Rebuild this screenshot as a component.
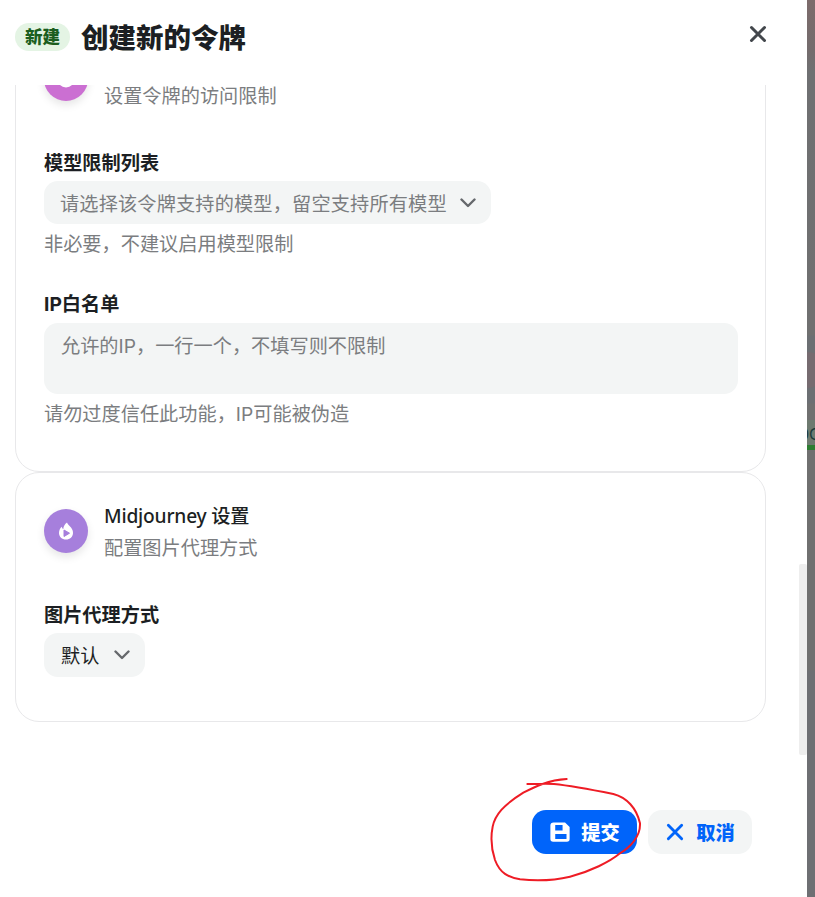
<div class="page">
  <aside class="drawer">
    <header class="head">
      <span class="tag">新建</span>
      <h1>创建新的令牌</h1>
      <button class="close" aria-label="关闭">
        <svg viewBox="0 0 24 24" width="24" height="24"><path d="M5.500 5.500l13 13M18.500 5.500l-13 13" /></svg>
      </button>
    </header>

    <div class="scroll">
      <div class="thumb"></div>
      <section class="card first">
        <div class="card-head">
          <span class="avatar pink">
            <svg viewBox="0 0 16 16" width="20" height="20">
              <circle cx="8" cy="8" r="5.500" fill="none" stroke="#fff" stroke-width="2.600" />
            </svg>
          </span>
          <div class="titles">
            <div class="title-space"></div>
            <div class="sub">设置令牌的访问限制</div>
          </div>
        </div>

        <div class="field model">
          <div class="label">模型限制列表</div>
          <div class="select wide">
            <span class="placeholder">请选择该令牌支持的模型，留空支持所有模型</span>
            <svg class="chev" viewBox="0 0 16 16" width="16" height="16"><path d="M1.500 4.500L8 11l6.500-6.500" /></svg>
          </div>
          <div class="help">非必要，不建议启用模型限制</div>
        </div>

        <div class="field ip">
          <div class="label">IP白名单</div>
          <div class="textarea"><span class="placeholder">允许的IP，一行一个，不填写则不限制</span></div>
          <div class="help">请勿过度信任此功能，IP可能被伪造</div>
        </div>
      </section>

      <section class="card second">
        <div class="card-head">
          <span class="avatar purple">
            <svg viewBox="0 0 16 18" width="16" height="18">
              <path d="M9 .5C9.500 2.500 11.500 3.500 13 5.500C14.500 7.500 15 9 15 11C15 14.800 12 17.500 8 17.500C4 17.500 1 14.800 1 11C1 8.500 2 6.500 3.700 4.800C4 6 4.500 6.800 5.300 7.200C5.300 4.500 6.800 2 9 .5Z" fill="#fff" />
              <path d="M6 8L11.500 11.200L6 14.500Z" fill="#a67fdc" stroke="#a67fdc" stroke-width="1" stroke-linejoin="round" />
            </svg>
          </span>
          <div class="titles">
            <div class="title">Midjourney 设置</div>
            <div class="sub">配置图片代理方式</div>
          </div>
        </div>

        <div class="field proxy">
          <div class="label">图片代理方式</div>
          <div class="select short">
            <span class="value">默认</span>
            <svg class="chev" viewBox="0 0 16 16" width="16" height="16"><path d="M1.500 4.500L8 11l6.500-6.500" /></svg>
          </div>
        </div>
      </section>
    </div>

    <footer class="foot">
      <button class="btn primary">
        <svg viewBox="0 0 24 24" width="22" height="22">
          <path fill-rule="evenodd" d="M5 1.500h12.500L22.500 6.500V19.500a3 3 0 0 1-3 3H4.500a3 3 0 0 1-3-3V5a3.500 3.500 0 0 1 3.500-3.500zM6.800 4.300v6h8v-6zM6.800 14.300v5.200h12.300v-5.200z" fill="#fff" />
        </svg>
        提交
      </button>
      <button class="btn ghost">
        <svg class="x" viewBox="0 0 24 24" width="20" height="20"><path d="M4 4l16 16M20 4L4 20" /></svg>
        取消
      </button>
    </footer>
  </aside>

  <div class="mask">
    <span class="blob"></span>
    <span class="green">0C</span>
  </div>

  <svg class="scribble" viewBox="0 0 1005 411" width="335" height="137" aria-hidden="true">
    <path d="M142 72C170 72 200 71 222 72C280 78 340 90 400 102C440 112 470 145 480 190C482 230 450 262 420 280C390 305 330 335 270 350C220 362 160 362 120 358C85 352 60 340 45 300C35 270 32 230 38 200C45 165 70 135 130 98C165 80 205 60 260 57" />
  </svg>
</div>

<style>
  :global(body) {
    margin: 0;
    background: #fff;
    font-family: Inter, "Noto Sans CJK SC", sans-serif;
  }
  .page {
    position: relative;
    display: flex;
    width: 815px;
    height: 897px;
    overflow: hidden;
  }
  .drawer {
    width: 807px;
    height: 897px;
    display: flex;
    flex-direction: column;
    background: #fff;
    flex: none;
  }
  .head {
    height: 85px;
    flex: none;
    display: flex;
    align-items: flex-start;
    padding: 23px 37px 0 15px;
    box-sizing: border-box;
  }
  .tag {
    width: 55px;
    height: 28px;
    border-radius: 14px;
    background: #e4f4e4;
    color: #1b5e20;
    font-size: 17.600px;
    font-weight: 900;
    line-height: 28px;
    text-align: center;
    margin-right: 11px;
  }
  h1 {
    margin: 0;
    font-size: 27.500px;
    line-height: 30px;
    font-weight: 900;
    color: #1c1f23;
    flex: 1;
  }
  .close {
    border: 0;
    background: none;
    padding: 0;
    width: 24px;
    height: 24px;
    margin-top: -1px;
  }
  .close path {
    fill: none;
    stroke: #43474c;
    stroke-width: 3;
    stroke-linecap: round;
  }
  .scroll {
    position: relative;
    flex: 1;
    overflow: hidden;
    padding: 0 41px 0 15px;
  }
  .thumb {
    position: absolute;
    right: 0;
    top: 479px;
    width: 8px;
    height: 191px;
    border-radius: 2px;
    background: #eeeeee;
  }
  .card {
    box-sizing: border-box;
    width: 751px;
    border: 1px solid #e8e8ea;
    border-radius: 24px;
    padding: 36px 27px 0 28px;
    background: #fff;
  }
  .first {
    margin-top: -65px;
    height: 452px;
  }
  .second {
    height: 250px;
  }
  .card-head {
    display: flex;
    align-items: center;
    gap: 16px;
    height: 44px;
  }
  .avatar {
    width: 44px;
    height: 44px;
    border-radius: 50%;
    display: flex;
    align-items: center;
    justify-content: center;
    box-shadow: 0 4px 8px rgba(0, 0, 0, 0.1);
    flex: none;
  }
  .pink { background: #cb6fd2; }
  .purple { background: #a67fdc; }
  .titles {
    display: flex;
    flex-direction: column;
    gap: 8px;
    margin-top: 2px;
  }
  .title-space { height: 24px; }
  .title {
    font-family: "Noto Sans", "Noto Sans CJK SC", sans-serif;
    font-size: 19.200px;
    line-height: 24px;
    font-weight: 500;
    letter-spacing: -0.2px;
    color: #1c1f23;
  }
  .sub, .help {
    font-size: 19.200px;
    line-height: 24px;
    color: #7b7d80;
  }
  .field {
    display: flex;
    flex-direction: column;
    align-items: flex-start;
  }
  .model { margin-top: 50px; }
  .ip { margin-top: 36px; }
  .proxy { margin-top: 50px; }
  .label {
    font-size: 19.200px;
    line-height: 24px;
    font-weight: 700;
    color: #1c1f23;
    margin-bottom: 6px;
  }
  .select {
    box-sizing: border-box;
    height: 43px;
    border-radius: 14px;
    background: #f3f5f5;
    display: flex;
    align-items: center;
    justify-content: space-between;
    padding: 0 15px 0 17px;
    font-size: 19.200px;
  }
  .wide { width: 447px; }
  .short { width: 101px; height: 44px; }
  .placeholder { color: #7b7d80; font-size: 19.200px; }
  .wide .placeholder { margin-left: -1px; letter-spacing: 0.15px; }
  .value { color: #1c1f23; }
  .chev path {
    fill: none;
    stroke: #65686c;
    stroke-width: 2.400;
    stroke-linecap: round;
    stroke-linejoin: round;
  }
  .textarea {
    box-sizing: border-box;
    width: 694px;
    height: 71px;
    margin-top: 1px;
    border-radius: 14px;
    background: #f3f5f5;
    padding: 11px 17px;
    line-height: 24px;
  }
  .help { margin-top: 8px; }
  .foot {
    height: 87px;
    flex: none;
    box-sizing: border-box;
    padding-right: 55px;
    display: flex;
    justify-content: flex-end;
    align-items: flex-start;
    gap: 11px;
  }
  .btn {
    box-sizing: border-box;
    height: 44px;
    border: 0;
    border-radius: 14px;
    display: flex;
    align-items: center;
    justify-content: center;
    gap: 11px;
    font-family: inherit;
    font-size: 19.200px;
    font-weight: 900;
    padding: 0;
  }
  .primary { width: 105px; gap: 10px; background: #0064fa; color: #fff; }
  .ghost { width: 104px; background: #f3f5f5; color: #0064fa; }
  .x path {
    fill: none;
    stroke: #0064fa;
    stroke-width: 3.400;
    stroke-linecap: round;
  }
  .mask {
    position: relative;
    flex: 1;
    height: 897px;
    background: linear-gradient(
      #7d6b6b 0,
      #746c6d 50px,
      #6f7072 72px,
      #707070 335px,
      #6c6f73 336px,
      #6c6f73 403px,
      #707070 404px,
      #707070 670px,
      #6e6f73 671px
    );
    overflow: hidden;
  }
  .blob {
    position: absolute;
    left: -18px;
    top: 352px;
    width: 36px;
    height: 36px;
    border-radius: 50%;
    background: #766b70;
  }
  .green {
    position: absolute;
    left: 0;
    top: 420px;
    width: 8px;
    height: 30px;
    background: #6e7a70;
    border-bottom: 5px solid #2e7d32;
    box-sizing: border-box;
    color: #1d3a3a;
    font-size: 16px;
    line-height: 28px;
    text-indent: -8px;
    white-space: nowrap;
    overflow: hidden;
  }
  .scribble {
    position: absolute;
    left: 480px;
    top: 760px;
  }
  .scribble path {
    fill: none;
    stroke: #ee1c25;
    stroke-width: 6;
    stroke-linecap: round;
    stroke-linejoin: round;
  }
</style>
